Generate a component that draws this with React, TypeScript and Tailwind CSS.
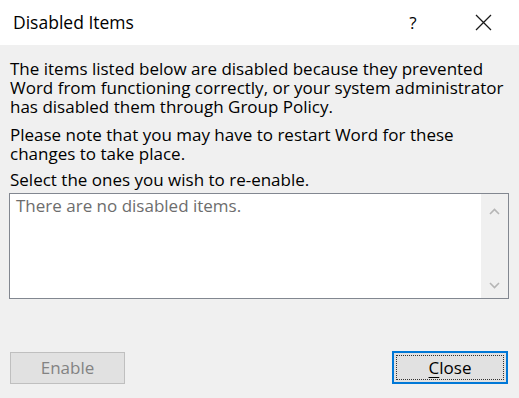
export default function App() {
  return (
    <div
      className="w-[519px] h-[398px] bg-[#f0f0f0] flex flex-col text-black overflow-hidden"
      style={{ fontFamily: '"Open Sans", "Noto Sans", sans-serif' }}
    >
      {/* title bar */}
      <div className="h-[45px] bg-white flex items-center shrink-0">
        <div className="pl-[13px] text-[17.5px] flex-1">Disabled Items</div>
        <div className="w-[30px] text-center text-[17px] mr-[43px]">?</div>
        <div className="w-[24px] mr-[24px] flex items-center justify-center">
          <svg width="17" height="17" viewBox="0 0 17 17">
            <path d="M1 1L16 16M16 1L1 16" stroke="#1a1a1a" strokeWidth="1.3" fill="none" />
          </svg>
        </div>
      </div>

      <div className="px-[10px] pt-[14px] text-[17px] leading-[19px] flex flex-col">
        <p>
          The items listed below are disabled because they prevented
          <br />
          Word from functioning correctly, or your system administrator
          <br />
          has disabled them through Group Policy.
        </p>
        <p className="mt-[9px]">
          Please note that you may have to restart Word for these
          <br />
          changes to take place.
        </p>
        <p className="mt-[7px]">Select the ones you wish to re-enable.</p>

        <div className="mt-[4px] ml-[-1px] w-[500px] h-[106px] border border-[#828790] bg-white flex">
          <div className="flex-1 pl-[6px] pt-[2px] text-[#6d6d6d]">There are no disabled items.</div>
          <div className="w-[27px] bg-[#f0f0f0] flex flex-col items-center justify-between pt-[14px] pb-[9px]">
            <svg width="11" height="7" viewBox="0 0 11 7">
              <path d="M1 6L5.5 1.5L10 6" stroke="#b5b5b5" strokeWidth="1.6" fill="none" />
            </svg>
            <svg width="11" height="7" viewBox="0 0 11 7">
              <path d="M1 1L5.5 5.5L10 1" stroke="#b5b5b5" strokeWidth="1.6" fill="none" />
            </svg>
          </div>
        </div>
      </div>

      <div className="mt-auto mb-[14px] px-[10px] flex justify-between items-center">
        <button className="w-[115px] h-[32px] border border-[#bfbfbf] bg-[#e1e1e1] text-[#838383] text-[17px]">
          Enable
        </button>
        <button className="w-[116px] h-[33px] mr-[1px] border-2 border-[#0078d7] bg-[#e1e1e1] p-[2px]">
          <div className="w-full h-full border border-dotted border-[#333] flex items-center justify-center text-[17px]">
            <span>
              <span className="underline underline-offset-[3px]">C</span>lose
            </span>
          </div>
        </button>
      </div>
    </div>
  );
}
